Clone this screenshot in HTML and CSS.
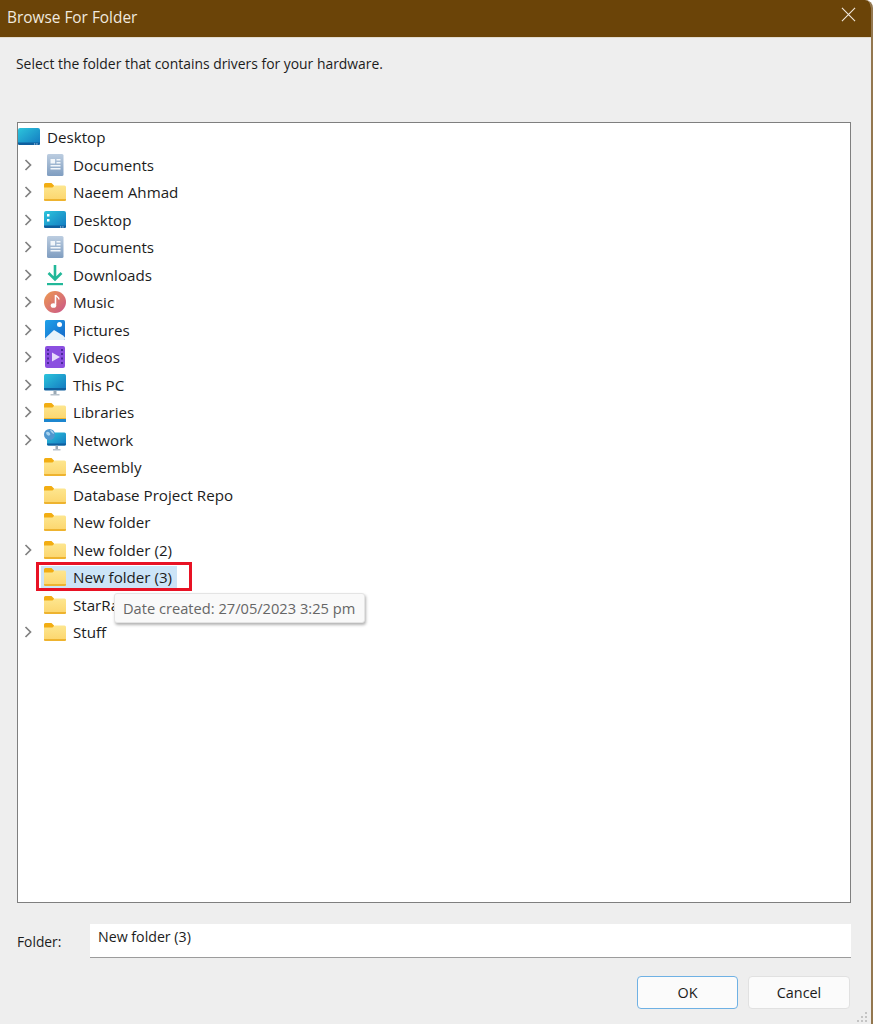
FILE: index.html
```html
<!DOCTYPE html>
<html lang="en">
<head>
<meta charset="utf-8">
<title>Browse For Folder</title>
<link rel="stylesheet" href="styles.css">
</head>
<body>
<svg class="defs" width="0" height="0" aria-hidden="true">
  <defs>
    <linearGradient id="gFolder" x1="0" y1="0" x2="0" y2="1"><stop offset="0" stop-color="#fde68f"/><stop offset="1" stop-color="#fcd56c"/></linearGradient>
    <linearGradient id="gDesk" x1="0" y1="0" x2="1" y2="1"><stop offset="0" stop-color="#2cc5dc"/><stop offset="1" stop-color="#1378c0"/></linearGradient>
    <linearGradient id="gDoc" x1="0" y1="0" x2="0" y2="1"><stop offset="0" stop-color="#bccde0"/><stop offset="1" stop-color="#7f9dc0"/></linearGradient>
    <linearGradient id="gMusic" x1="0" y1="0" x2="1" y2="1"><stop offset="0" stop-color="#ee9a50"/><stop offset="1" stop-color="#c9558a"/></linearGradient>
    <linearGradient id="gPic" x1="0" y1="0" x2="1" y2="1"><stop offset="0" stop-color="#1fa2ea"/><stop offset="1" stop-color="#1667c8"/></linearGradient>
    <symbol id="i-folder" viewBox="0 0 22 22">
      <path d="M0 3.500A1.500 1.500 0 0 1 1.500 2H7.500L10 4.500V8H0Z" fill="#f2ad12"/>
      <path d="M0 6.500H8.500L10.500 4.500H20.500A1.500 1.500 0 0 1 22 6V18.500A1.500 1.500 0 0 1 20.500 20H1.500A1.500 1.500 0 0 1 0 18.500Z" fill="url(#gFolder)"/>
      <path d="M0 18.500A1.500 1.500 0 0 0 1.500 20H20.500A1.500 1.500 0 0 0 22 18.500V18H0Z" fill="#eeb32f"/>
    </symbol>
    <symbol id="i-library" viewBox="0 0 22 22">
      <path d="M0 3.500A1.500 1.500 0 0 1 1.500 2H7.500L10 4.500V8H0Z" fill="#f2ad12"/>
      <path d="M0 6.500H8.500L10.500 4.500H20.500A1.500 1.500 0 0 1 22 6V19H0Z" fill="url(#gFolder)"/>
      <rect x="0" y="18" width="22" height="3" fill="#1c86cf"/>
      <rect x="0" y="17" width="22" height="1" fill="#eeb32f"/>
    </symbol>
    <symbol id="i-desktop" viewBox="0 0 22 22">
      <rect x="0" y="2" width="22" height="17" rx="2" fill="url(#gDesk)"/>
      <path d="M0 16.500H22V17.500A1.500 1.500 0 0 1 20.500 19H1.500A1.500 1.500 0 0 1 0 17.500Z" fill="#0f5f9e"/>
      <rect x="16" y="17.500" width="1.200" height="1" fill="#cfe6f5"/><rect x="18.300" y="17.500" width="1.200" height="1" fill="#cfe6f5"/>
    </symbol>
    <symbol id="i-desktop2" viewBox="0 0 22 22">
      <rect x="0" y="2" width="22" height="17" rx="2" fill="url(#gDesk)"/>
      <path d="M0 16.500H22V17.500A1.500 1.500 0 0 1 20.500 19H1.500A1.500 1.500 0 0 1 0 17.500Z" fill="#0f5f9e"/>
      <rect x="3" y="5" width="2.500" height="2.500" fill="#fff"/><rect x="3" y="10" width="2.500" height="2.500" fill="#fff"/>
      <rect x="16" y="17.500" width="1.200" height="1" fill="#cfe6f5"/><rect x="18.300" y="17.500" width="1.200" height="1" fill="#cfe6f5"/>
    </symbol>
    <symbol id="i-doc" viewBox="0 0 22 22">
      <rect x="3" y="0" width="16.500" height="22" rx="1.500" fill="url(#gDoc)"/>
      <g fill="#f2f6fa">
        <rect x="6.500" y="5" width="4.500" height="4.500"/><rect x="12.500" y="5" width="4" height="1.500"/><rect x="12.500" y="8" width="4" height="1.500"/>
        <rect x="6.500" y="11" width="10" height="1.500"/><rect x="6.500" y="14" width="10" height="1.500"/>
      </g>
    </symbol>
    <symbol id="i-download" viewBox="0 0 22 22">
      <path d="M11 1V15M4.500 9L11 15.500L17.500 9" fill="none" stroke="#22b899" stroke-width="2.600"/>
      <rect x="3" y="19" width="16" height="2.200" fill="#22b899"/>
    </symbol>
    <symbol id="i-music" viewBox="0 0 22 22">
      <circle cx="11" cy="11" r="11" fill="url(#gMusic)"/>
      <path d="M11.500 4V13.500" stroke="#fff" stroke-width="1.600" fill="none"/>
      <path d="M11.500 4C12.500 6 15 6 15 8.500" stroke="#fff" stroke-width="1.400" fill="none"/>
      <ellipse cx="9.500" cy="14.500" rx="2.800" ry="2.300" fill="#fff"/>
    </symbol>
    <symbol id="i-pic" viewBox="0 0 22 22">
      <rect x="1" y="1" width="20" height="20" rx="1.500" fill="url(#gPic)"/>
      <circle cx="15.500" cy="5.500" r="2.500" fill="#fff"/>
      <path d="M1 19.500L10 11L19 16.500L21 18.500V19.500A1.500 1.500 0 0 1 19.500 21H2.500A1.500 1.500 0 0 1 1 19.500Z" fill="#e8f3fb"/>
    </symbol>
    <symbol id="i-video" viewBox="0 0 22 22">
      <rect x="1" y="0" width="20" height="22" rx="2" fill="#8b4fe0"/>
      <g fill="#4b2a9c">
        <rect x="3" y="3" width="2" height="2"/><rect x="3" y="7" width="2" height="2"/><rect x="3" y="11.500" width="2" height="2"/><rect x="3" y="16" width="2" height="2"/>
        <rect x="17" y="3" width="2" height="2"/><rect x="17" y="7" width="2" height="2"/><rect x="17" y="11.500" width="2" height="2"/><rect x="17" y="16" width="2" height="2"/>
      </g>
      <path d="M8 6.500L16 11L8 15.500Z" fill="#e6d9fb"/>
    </symbol>
    <symbol id="i-pc" viewBox="0 0 22 22">
      <rect x="0" y="0" width="22" height="16" rx="1.500" fill="url(#gDesk)"/>
      <path d="M0 14H22V15A1.500 1.500 0 0 1 20.500 16.500H1.500A1.500 1.500 0 0 1 0 15Z" fill="#0f5f9e"/>
      <rect x="9.500" y="16.500" width="3" height="3.500" fill="#9aa9b5"/>
      <rect x="6.500" y="20" width="9" height="1.500" fill="#b7c2cb"/>
    </symbol>
    <symbol id="i-net" viewBox="0 0 22 22">
      <rect x="3" y="3.500" width="19" height="13" rx="1.500" fill="url(#gDesk)"/>
      <path d="M3 14.500H22V15A1.500 1.500 0 0 1 20.500 16.500H4.500A1.500 1.500 0 0 1 3 15Z" fill="#0f5f9e"/>
      <rect x="11.500" y="16.500" width="2.500" height="3.500" fill="#9aa9b5"/>
      <rect x="9" y="20" width="7.500" height="1.500" fill="#b7c2cb"/>
      <circle cx="5.500" cy="5.500" r="5.500" fill="#4f97cf"/>
      <path d="M2 3.500C4 2 5 3 6 4.500C7 6 5 7 4 6.500C3 6 2 5 2 3.500ZM6 1C8 1 10 3 10 5C8.500 4.500 6.500 2.500 6 1Z" fill="#a9d3ee"/>
    </symbol>
    <symbol id="i-chev" viewBox="0 0 8 12">
      <path d="M1.500 1L6.500 6L1.500 11" fill="none" stroke="#808080" stroke-width="1.700"/>
    </symbol>
  </defs>
</svg>

<main class="dialog">
  <header class="titlebar">
    <span class="title">Browse For Folder</span>
    <svg class="close" viewBox="0 0 16 16" aria-label="Close"><path d="M1 1L15 15M15 1L1 15" stroke="#f1e8dc" stroke-width="1.200" fill="none"/></svg>
  </header>

  <section class="body">
    <p class="prompt">Select the folder that contains drivers for your hardware.</p>

    <div class="tree">
      <div class="row root"><svg class="icon"><use href="#i-desktop"/></svg><span class="label">Desktop</span></div>
      <div class="row"><svg class="chev"><use href="#i-chev"/></svg><svg class="icon"><use href="#i-doc"/></svg><span class="label">Documents</span></div>
      <div class="row"><svg class="chev"><use href="#i-chev"/></svg><svg class="icon"><use href="#i-folder"/></svg><span class="label">Naeem Ahmad</span></div>
      <div class="row"><svg class="chev"><use href="#i-chev"/></svg><svg class="icon"><use href="#i-desktop2"/></svg><span class="label">Desktop</span></div>
      <div class="row"><svg class="chev"><use href="#i-chev"/></svg><svg class="icon"><use href="#i-doc"/></svg><span class="label">Documents</span></div>
      <div class="row"><svg class="chev"><use href="#i-chev"/></svg><svg class="icon"><use href="#i-download"/></svg><span class="label">Downloads</span></div>
      <div class="row"><svg class="chev"><use href="#i-chev"/></svg><svg class="icon"><use href="#i-music"/></svg><span class="label">Music</span></div>
      <div class="row"><svg class="chev"><use href="#i-chev"/></svg><svg class="icon"><use href="#i-pic"/></svg><span class="label">Pictures</span></div>
      <div class="row"><svg class="chev"><use href="#i-chev"/></svg><svg class="icon"><use href="#i-video"/></svg><span class="label">Videos</span></div>
      <div class="row"><svg class="chev"><use href="#i-chev"/></svg><svg class="icon"><use href="#i-pc"/></svg><span class="label">This PC</span></div>
      <div class="row"><svg class="chev"><use href="#i-chev"/></svg><svg class="icon"><use href="#i-library"/></svg><span class="label">Libraries</span></div>
      <div class="row"><svg class="chev"><use href="#i-chev"/></svg><svg class="icon"><use href="#i-net"/></svg><span class="label">Network</span></div>
      <div class="row leaf"><svg class="icon"><use href="#i-folder"/></svg><span class="label">Aseembly</span></div>
      <div class="row leaf"><svg class="icon"><use href="#i-folder"/></svg><span class="label">Database Project Repo</span></div>
      <div class="row leaf"><svg class="icon"><use href="#i-folder"/></svg><span class="label">New folder</span></div>
      <div class="row"><svg class="chev"><use href="#i-chev"/></svg><svg class="icon"><use href="#i-folder"/></svg><span class="label">New folder (2)</span></div>
      <div class="row leaf selected">
        <div class="sel-band"><svg class="icon"><use href="#i-folder"/></svg><span class="label">New folder (3)</span></div>
        <div class="redbox"></div>
      </div>
      <div class="row leaf">
        <svg class="icon"><use href="#i-folder"/></svg><span class="label">StarRail</span>
        <div class="tooltip">Date created: 27/05/2023 3:25 pm</div>
      </div>
      <div class="row"><svg class="chev"><use href="#i-chev"/></svg><svg class="icon"><use href="#i-folder"/></svg><span class="label">Stuff</span></div>
    </div>

    <div class="folder-line">
      <span class="folder-label">Folder:</span>
      <div class="folder-input">New folder (3)</div>
    </div>

    <div class="actions">
      <button class="btn primary">OK</button>
      <button class="btn">Cancel</button>
    </div>
  </section>

  <svg class="grip" viewBox="0 0 12 12" aria-hidden="true">
    <g fill="#c4c4c4">
      <rect x="9" y="0" width="2" height="2"/>
      <rect x="5" y="4" width="2" height="2"/><rect x="9" y="4" width="2" height="2"/>
      <rect x="1" y="8" width="2" height="2"/><rect x="5" y="8" width="2" height="2"/><rect x="9" y="8" width="2" height="2"/>
    </g>
  </svg>
</main>
</body>
</html>
```

FILE: styles.css
```css
* { box-sizing: border-box; }

html, body {
  margin: 0;
  height: 100%;
  background: #fff;
}

body {
  font-family: "Open Sans", "Noto Sans", "Liberation Sans", sans-serif;
  font-size: 15.15px;
  color: #1c1c1c;
  overflow: hidden;
}

.defs { position: absolute; }

.dialog {
  position: relative;
  width: 873px;
  height: 1024px;
  display: flex;
  flex-direction: column;
  background: #eeeeee;
  border-right: 2px solid #93774f;
  border-top-right-radius: 8px;
  overflow: hidden;
}

.titlebar {
  flex: none;
  height: 38px;
  background: #6b4408;
  border-bottom: 1px solid #e3dccf;
  display: flex;
  align-items: center;
  justify-content: space-between;
  padding: 0 15px 2px 7px;
}

.title {
  font-size: 15.4px;
  color: #f0e9df;
}

.close { width: 15px; height: 15px; margin-top: -6px; }

.body {
  flex: 1;
  display: flex;
  flex-direction: column;
  padding: 0 20px 0 16px;
  min-height: 0;
}

.prompt {
  margin: 15px 0 0;
  height: 21px;
  line-height: 21px;
  font-size: 13.9px;
}

.tree {
  margin-top: 48px;
  margin-left: 1px;
  width: 834px;
  height: 781px;
  background: #fff;
  border: 1.5px solid #7f7f7f;
  padding-top: 0.5px;
  flex: none;
}

.row {
  position: relative;
  height: 27.5px;
  display: flex;
  align-items: center;
  padding-left: 6px;
}

.row.leaf { padding-left: 26px; }
.row.root { padding-left: 0; }
.row.root .icon { margin-right: 7px; }

.chev {
  flex: none;
  width: 8px;
  height: 12px;
  margin-right: 12px;
}

.icon {
  flex: none;
  width: 22px;
  height: 22px;
  margin-right: 7px;
}

.label {
  white-space: nowrap;
  line-height: 22px;
}

.sel-band {
  display: flex;
  align-items: center;
  height: 22px;
  margin-left: -3px;
  padding: 0 5px 0 3px;
  background: #cce4f7;
}

.redbox {
  position: absolute;
  left: 18px;
  top: -2px;
  width: 156px;
  height: 29px;
  border: 3px solid #e81224;
}

.tooltip {
  position: absolute;
  left: 96px;
  top: 1.5px;
  width: 251px;
  height: 30px;
  line-height: 28px;
  padding-left: 8px;
  font-size: 14.65px;
  color: #666;
  background: #f9f9f9;
  border: 1px solid #e4e4e4;
  border-radius: 3px;
  box-shadow: 1px 2px 3px rgba(0, 0, 0, .3);
  white-space: nowrap;
  z-index: 2;
}

.folder-line {
  flex: none;
  display: flex;
  margin-top: 21px;
  margin-left: 1px;
  width: 834px;
  height: 34px;
}

.folder-label {
  width: 73px;
  flex: none;
  padding-top: 7px;
  line-height: 22px;
  font-size: 13.8px;
}

.folder-input {
  flex: 1;
  background: #fff;
  border-bottom: 1px solid #9c9c9c;
  padding: 2px 8px 0;
  line-height: 22px;
  font-size: 14.2px;
}

.actions {
  flex: none;
  margin-top: 18px;
  width: 833px;
  margin-left: 1px;
  display: flex;
  justify-content: flex-end;
  gap: 10px;
}

.btn {
  width: 102px;
  height: 33px;
  font: inherit;
  font-size: 14.4px;
  color: #1a1a1a;
  background: #fbfbfb;
  border: 1px solid #e1e1e1;
  border-radius: 4px;
  padding: 0;
}

.btn.primary {
  width: 101px;
  border: 1.5px solid #6fb1e4;
}

.grip {
  position: absolute;
  right: 3px;
  bottom: 0;
  width: 12px;
  height: 12px;
}
```
